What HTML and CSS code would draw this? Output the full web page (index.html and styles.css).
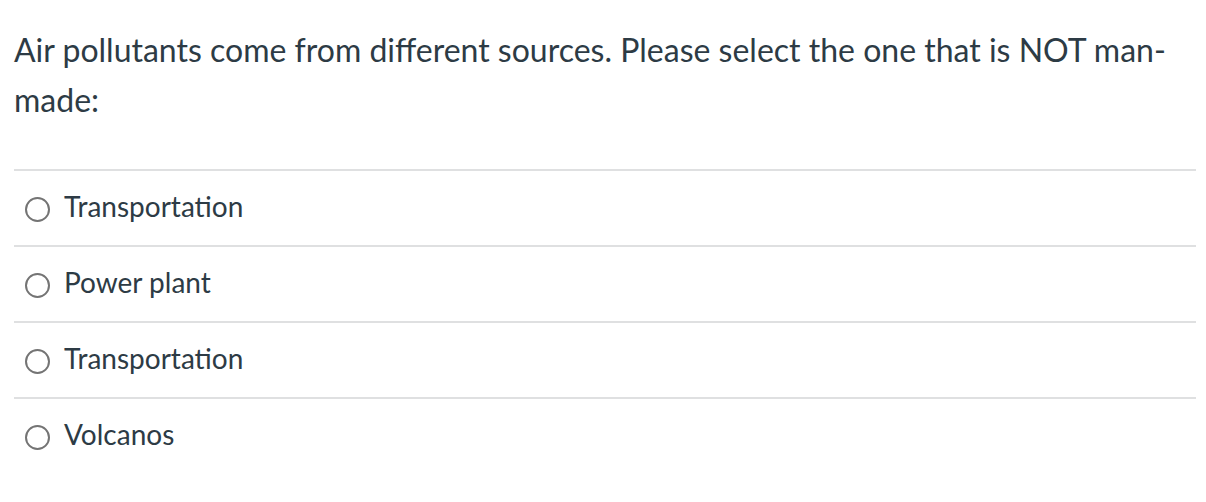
FILE: index.html
```html
<!DOCTYPE html>
<html>
<head>
<meta charset="utf-8">
<link rel="stylesheet" href="styles.css">
</head>
<body>
<div class="question">
  <div class="question-text">Air pollutants come from different sources. Please select the one that is NOT man-made:</div>
  <div class="answers">
    <label class="answer"><span class="radio"></span><span class="answer-text">Transportation</span></label>
    <label class="answer"><span class="radio"></span><span class="answer-text">Power plant</span></label>
    <label class="answer"><span class="radio"></span><span class="answer-text">Transportation</span></label>
    <label class="answer"><span class="radio"></span><span class="answer-text">Volcanos</span></label>
  </div>
</div>
</body>
</html>
```
FILE: styles.css
```css
html, body {
  margin: 0;
  padding: 0;
  background: #ffffff;
}
body {
  font-family: Lato, "Liberation Sans", sans-serif;
  color: #2d3b45;
}
.question {
  padding: 25px 10px 0 14px;
}
.question-text {
  font-size: 32px;
  line-height: 50px;
  margin-bottom: 44px;
}
.answers {
  display: flex;
  flex-direction: column;
}
.answer {
  display: flex;
  align-items: center;
  height: 76px;
  border-top: 2px solid #dfe0e1;
  box-sizing: border-box;
  padding-left: 11px;
  padding-bottom: 4px;
}
.radio {
  width: 21px;
  height: 21px;
  border: 2px solid #747474;
  border-radius: 50%;
  flex: none;
  margin-top: 6px;
  margin-right: 14px;
}
.answer-text {
  font-size: 28px;
}
```
